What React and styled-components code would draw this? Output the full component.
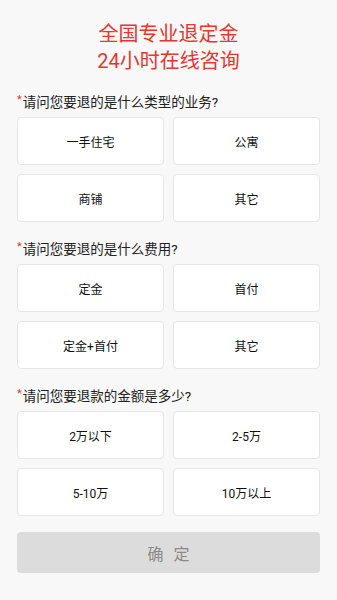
import React from 'react';
import styled, { createGlobalStyle } from 'styled-components';

const sections = [
    {
        id: 1,
        label: '请问您要退的是什么类型的业务?',
        options: ['一手住宅', '公寓', '商铺', '其它']
    },
    {
        id: 2,
        label: '请问您要退的是什么费用?',
        options: ['定金', '首付', '定金+首付', '其它']
    },
    {
        id: 3,
        label: '请问您要退款的金额是多少?',
        options: ['2万以下', '2-5万', '5-10万', '10万以上']
    }
];

const GlobalStyle = createGlobalStyle`
    body {
        margin: 0;
        background: #f8f8f8;
        font-family: Roboto, "Noto Sans CJK SC", sans-serif;
    }
`;

const App = () => {
    return (
        <Page>
            <GlobalStyle />
            <Title>
                全国专业退定金<br />24小时在线咨询
            </Title>

            {sections.map(section => (
                <Section key={section.id}>
                    <Label>
                        <Star>*</Star>
                        {section.label}
                    </Label>
                    <Options>
                        {section.options.map(opt => (
                            <Option key={opt}>{opt}</Option>
                        ))}
                    </Options>
                </Section>
            ))}

            <Submit>确 定</Submit>
        </Page>
    );
};

export default App;

const Page = styled.div`
    padding: 21px 17px 20px;
    min-height: 600px;
    box-sizing: border-box;
`;

const Title = styled.h1`
    margin: 0;
    text-align: center;
    color: #e8352e;
    font-size: 20px;
    font-weight: 400;
    line-height: 27px;
`;

const Section = styled.div`
    margin-top: 16px;
`;

const Label = styled.div`
    display: flex;
    align-items: center;
    height: 20px;
    font-size: 13.5px;
    color: #222;
    margin-bottom: 6px;
`;

const Star = styled.span`
    color: #e8352e;
    font-size: 11px;
    margin-right: 1px;
    align-self: flex-start;
    margin-top: 2px;
`;

const Options = styled.div`
    display: grid;
    grid-template-columns: 1fr 1fr;
    gap: 9px;
`;

const Option = styled.div`
    height: 48px;
    display: flex;
    align-items: center;
    justify-content: center;
    background: #fff;
    border: 1px solid #e6e6e6;
    border-radius: 4px;
    box-sizing: border-box;
    font-size: 12px;
    font-weight: 400;
    color: #111;
`;

const Submit = styled.button`
    display: block;
    width: 100%;
    height: 41px;
    margin-top: 16px;
    border: none;
    border-radius: 4px;
    background: #dcdcdc;
    color: #8a8a8a;
    font-family: Roboto, "Noto Sans CJK SC", sans-serif;
    font-size: 16px;
    letter-spacing: 3px;
    text-indent: 3px;
`;
